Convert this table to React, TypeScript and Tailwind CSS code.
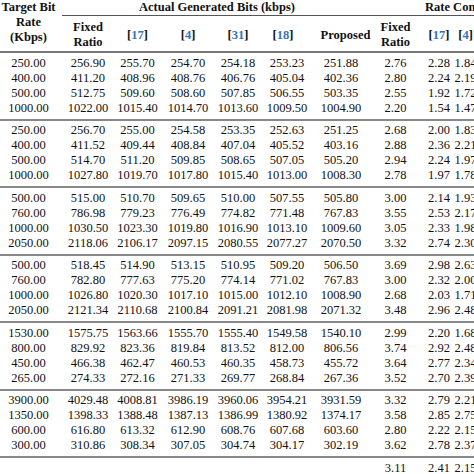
const groups: string[][] = [
  [
    '250.00 256.90 255.70 254.70 254.18 253.23 251.88 2.76 2.28 1.84 1.63',
    '400.00 411.20 408.96 408.76 406.76 405.04 402.36 2.80 2.24 2.19 1.69',
    '500.00 512.75 509.60 508.60 507.85 506.55 503.35 2.55 1.92 1.72 1.57',
    '1000.00 1022.00 1015.40 1014.70 1013.60 1009.50 1004.90 2.20 1.54 1.47 1.36',
  ],
  [
    '250.00 256.70 255.00 254.58 253.35 252.63 251.25 2.68 2.00 1.83 1.34',
    '400.00 411.52 409.44 408.84 407.04 405.52 403.16 2.88 2.36 2.21 1.76',
    '500.00 514.70 511.20 509.85 508.65 507.05 505.20 2.94 2.24 1.97 1.73',
    '1000.00 1027.80 1019.70 1017.80 1015.40 1013.00 1008.30 2.78 1.97 1.78 1.54',
  ],
  [
    '500.00 515.00 510.70 509.65 510.00 507.55 505.80 3.00 2.14 1.93 2.00',
    '760.00 786.98 779.23 776.49 774.82 771.48 767.83 3.55 2.53 2.17 1.92',
    '1000.00 1030.50 1023.30 1019.80 1016.90 1013.10 1009.60 3.05 2.33 1.98 1.69',
    '2050.00 2118.06 2106.17 2097.15 2080.55 2077.27 2070.50 3.32 2.74 2.30 1.49',
  ],
  [
    '500.00 518.45 514.90 513.15 510.95 509.20 506.50 3.69 2.98 2.63 2.19',
    '760.00 782.80 777.63 775.20 774.14 771.02 767.83 3.00 2.32 2.00 1.86',
    '1000.00 1026.80 1020.30 1017.10 1015.00 1012.10 1008.90 2.68 2.03 1.71 1.50',
    '2050.00 2121.34 2110.68 2100.84 2091.21 2081.98 2071.32 3.48 2.96 2.48 2.01',
  ],
  [
    '1530.00 1575.75 1563.66 1555.70 1555.40 1549.58 1540.10 2.99 2.20 1.68 1.66',
    '800.00 829.92 823.36 819.84 813.52 812.00 806.56 3.74 2.92 2.48 1.69',
    '450.00 466.38 462.47 460.53 460.35 458.73 455.72 3.64 2.77 2.34 2.30',
    '265.00 274.33 272.16 271.33 269.77 268.84 267.36 3.52 2.70 2.39 1.80',
  ],
  [
    '3900.00 4029.48 4008.81 3986.19 3960.06 3954.21 3931.59 3.32 2.79 2.21 1.54',
    '1350.00 1398.33 1388.48 1387.13 1386.99 1380.92 1374.17 3.58 2.85 2.75 2.74',
    '600.00 616.80 613.32 612.90 608.76 607.68 603.60 2.80 2.22 2.15 1.46',
    '300.00 310.86 308.34 307.05 304.74 304.17 302.19 3.62 2.78 2.37 1.58',
  ],
];

const gridCols = 'grid grid-cols-[57px_62px_37px_64px_36px_62px_46px_63px_24px_29px_40px]';

const Ref = ({ n }: { n: string }) => (
  <span>
    [<span className="text-[#2f74c0]">{n}</span>]
  </span>
);

const Row = ({ line }: { line: string }) => (
  <div className={`${gridCols} h-[15px]`}>
    {line.split(' ').map((v, i) => (
      <div key={i} className="flex justify-center whitespace-nowrap">
        {v}
      </div>
    ))}
  </div>
);

const HeadCell = ({ children, className = '' }: { children: React.ReactNode; className?: string }) => (
  <div className={`flex flex-col items-center justify-center whitespace-nowrap pt-[4px] pb-[1px] ${className}`}>
    {children}
  </div>
);

export default function App() {
  return (
    <div className="w-[474px] h-[474px] overflow-hidden bg-white text-[#111] font-['Liberation_Serif',serif] text-[12.5px] leading-[15px]">
      <div className="w-[520px]">
        {/* header */}
        <div className={`${gridCols} grid-rows-[16px_35px] font-bold`}>
          <div className="row-span-2 flex flex-col items-center whitespace-nowrap">
            <span>Target Bit</span>
            <span>Rate</span>
            <span>(Kbps)</span>
          </div>
          <div className="col-span-6 ml-[5px] pl-[8px] border-b border-[#555] flex justify-center whitespace-nowrap">
            Actual Generated Bits (kbps)
          </div>
          <div className="col-span-4 border-b border-[#555] pl-[61px] whitespace-nowrap">
            Rate Control Error (%)
          </div>
          <HeadCell>
            <span>Fixed</span>
            <span>Ratio</span>
          </HeadCell>
          <HeadCell><Ref n="17" /></HeadCell>
          <HeadCell><Ref n="4" /></HeadCell>
          <HeadCell><Ref n="31" /></HeadCell>
          <HeadCell className="pr-[8px]"><Ref n="18" /></HeadCell>
          <HeadCell className="pl-[9px]">Proposed</HeadCell>
          <HeadCell>
            <span>Fixed</span>
            <span>Ratio</span>
          </HeadCell>
          <HeadCell><Ref n="17" /></HeadCell>
          <HeadCell><Ref n="4" /></HeadCell>
          <HeadCell><Ref n="31" /></HeadCell>
        </div>
        <div className="h-[2px] bg-[#777]" />

        {groups.map((g, gi) => (
          <div key={gi}>
            <div className="pt-[2.5px] pb-[3px]">
              {g.map((line, li) => (
                <Row key={li} line={line} />
              ))}
            </div>
            <div className="h-[2px] bg-[#888]" />
          </div>
        ))}

        {/* average */}
        <div className={`${gridCols} h-[15px] mt-[3px]`}>
          <div className="col-span-7" />
          <div className="flex justify-center">3.11</div>
          <div className="flex justify-center">2.41</div>
          <div className="flex justify-center">2.15</div>
          <div className="flex justify-center">1.80</div>
        </div>
      </div>
    </div>
  );
}
